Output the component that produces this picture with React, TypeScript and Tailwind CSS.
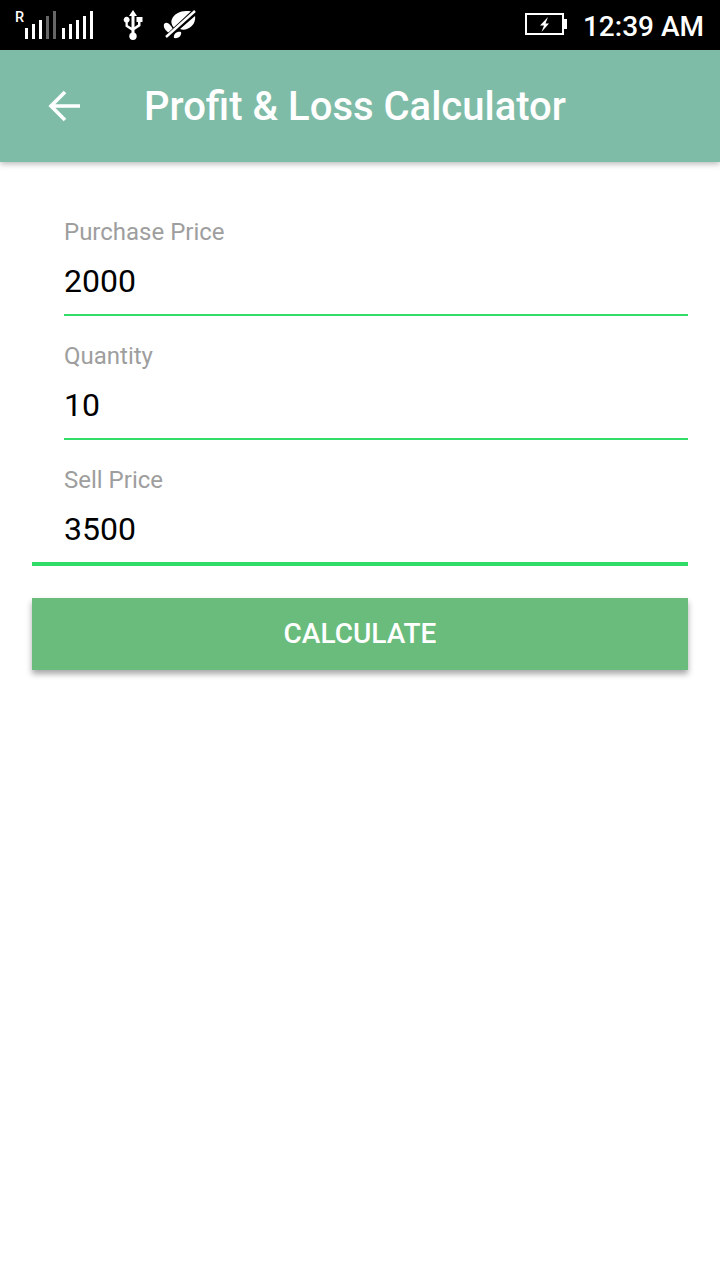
import React from "react";

const fields = [
  { label: "Purchase Price", value: "2000" },
  { label: "Quantity", value: "10" },
  { label: "Sell Price", value: "3500", focused: true },
];

const bars = [
  [25, 23, "#fff"],
  [32, 19, "#fff"],
  [39, 15, "#fff"],
  [46, 11, "#666"],
  [53, 6, "#666"],
  [62, 23, "#fff"],
  [69, 19, "#fff"],
  [76, 15, "#fff"],
  [83, 11, "#fff"],
  [90, 6, "#fff"],
] as const;

function Signal() {
  return (
    <svg width="96" height="40" viewBox="0 0 96 40" fill="none">
      <text x="15" y="17" fill="#fff" fontSize="14.5" fontWeight="500" fontFamily="Roboto, sans-serif">R</text>
      {bars.map(([x, y, color]) => (
        <rect key={x} x={x} y={y} width="3" height={34 - y} fill={color} />
      ))}
    </svg>
  );
}

function UsbIcon() {
  return (
    <svg width="24" height="30" viewBox="0 0 24 30" fill="none">
      <path d="M12 0 L16 6 H13.5 V17 L17 14.5 V12 H15.5 V7 H21.5 V12 H19.5 V16 L13.5 20 V24 H10.5 V20.5 L4.5 16.5 V12.5 A3 3 0 1 1 6.8 12.5 V15.2 L10.5 17.5 V6 H8 Z" fill="#fff" />
      <circle cx="12" cy="26.3" r="3.7" fill="#fff" />
    </svg>
  );
}

function LeafOffIcon() {
  return (
    <svg width="34" height="30" viewBox="0 0 34 30" fill="none">
      <path d="M9 9 C11 4 17 1 23 1 C26 1 29 1 32 2 L13 20 C10 17 7 13 9 9 Z" fill="#fff" />
      <path d="M17 19 L32 6 C33 11 30 17 24 19 C22 20 19 20 17 19 Z" fill="#fff" />
      <path d="M1 14 C4 11 7 14 10 19 L6 23 C3 21 0 18 1 14 Z" fill="#fff" />
      <path d="M11 28 C10 24 14 21 18 22 C19 25 16 29 11 28 Z" fill="#fff" />
      <path d="M2 29 L33 0" stroke="#000" strokeWidth="5" />
      <path d="M3 27 L32 1" stroke="#fff" strokeWidth="2.4" />
    </svg>
  );
}

function BatteryIcon() {
  return (
    <svg width="42" height="22" viewBox="0 0 42 22" fill="none">
      <rect x="1" y="1" width="37" height="20" stroke="#fff" strokeWidth="2" />
      <rect x="39" y="6" width="3" height="10" fill="#fff" />
      <path d="M23 4 L15 12.5 H19 L16.5 19 L24 10.5 H20.5 Z" fill="#fff" />
    </svg>
  );
}

export default function App() {
  return (
    <div className="min-h-[1280px] w-[720px] bg-white font-['Roboto',sans-serif]">
      {/* Status bar */}
      <div className="flex h-[50px] items-center bg-black text-white">
        <Signal />
        <div className="ml-[25px] flex items-center">
          <UsbIcon />
        </div>
        <div className="ml-[18px] flex items-center">
          <LeafOffIcon />
        </div>
        <div className="ml-auto flex items-center pr-[16px]">
          <div className="-mt-[3px] mr-[2px] flex">
            <BatteryIcon />
          </div>
          <span className="ml-[14px] mt-[3px] text-[28px] font-medium leading-none">12:39 AM</span>
        </div>
      </div>

      {/* App bar */}
      <div className="flex h-[112px] items-center bg-[#7fbca8] shadow-[0_2px_6px_rgba(0,0,0,0.28)]">
        <svg className="ml-[48px]" width="33" height="32" viewBox="0 0 33 32" fill="none">
          <path d="M32 16 H3 M17 2 L3 16 L17 30" stroke="#fff" strokeWidth="3.6" />
        </svg>
        <h1 className="ml-[63px] mt-[2px] text-[40px] font-medium leading-none text-white">Profit &amp; Loss Calculator</h1>
      </div>

      {/* Form */}
      <div className="px-[32px] pt-[52px]">
        {fields.map((f) => (
          <div key={f.label} className="h-[124px]">
            <div className="pl-[32px] text-[24px] leading-[36px] text-[#9e9e9e]">{f.label}</div>
            <div className="pl-[32px] pt-[11px] text-[32px] leading-[40px] text-black">{f.value}</div>
            <div className={f.focused ? "mt-[13px] h-[4px] bg-[#32dc68]" : "ml-[32px] mt-[13px] h-[2px] bg-[#32dc68]"} />
          </div>
        ))}
        <button className="mt-[12px] block h-[72px] w-full bg-[#6abc7c] text-[28px] font-medium text-white shadow-[0_4px_6px_rgba(0,0,0,0.35)]">
          CALCULATE
        </button>
      </div>
    </div>
  );
}
